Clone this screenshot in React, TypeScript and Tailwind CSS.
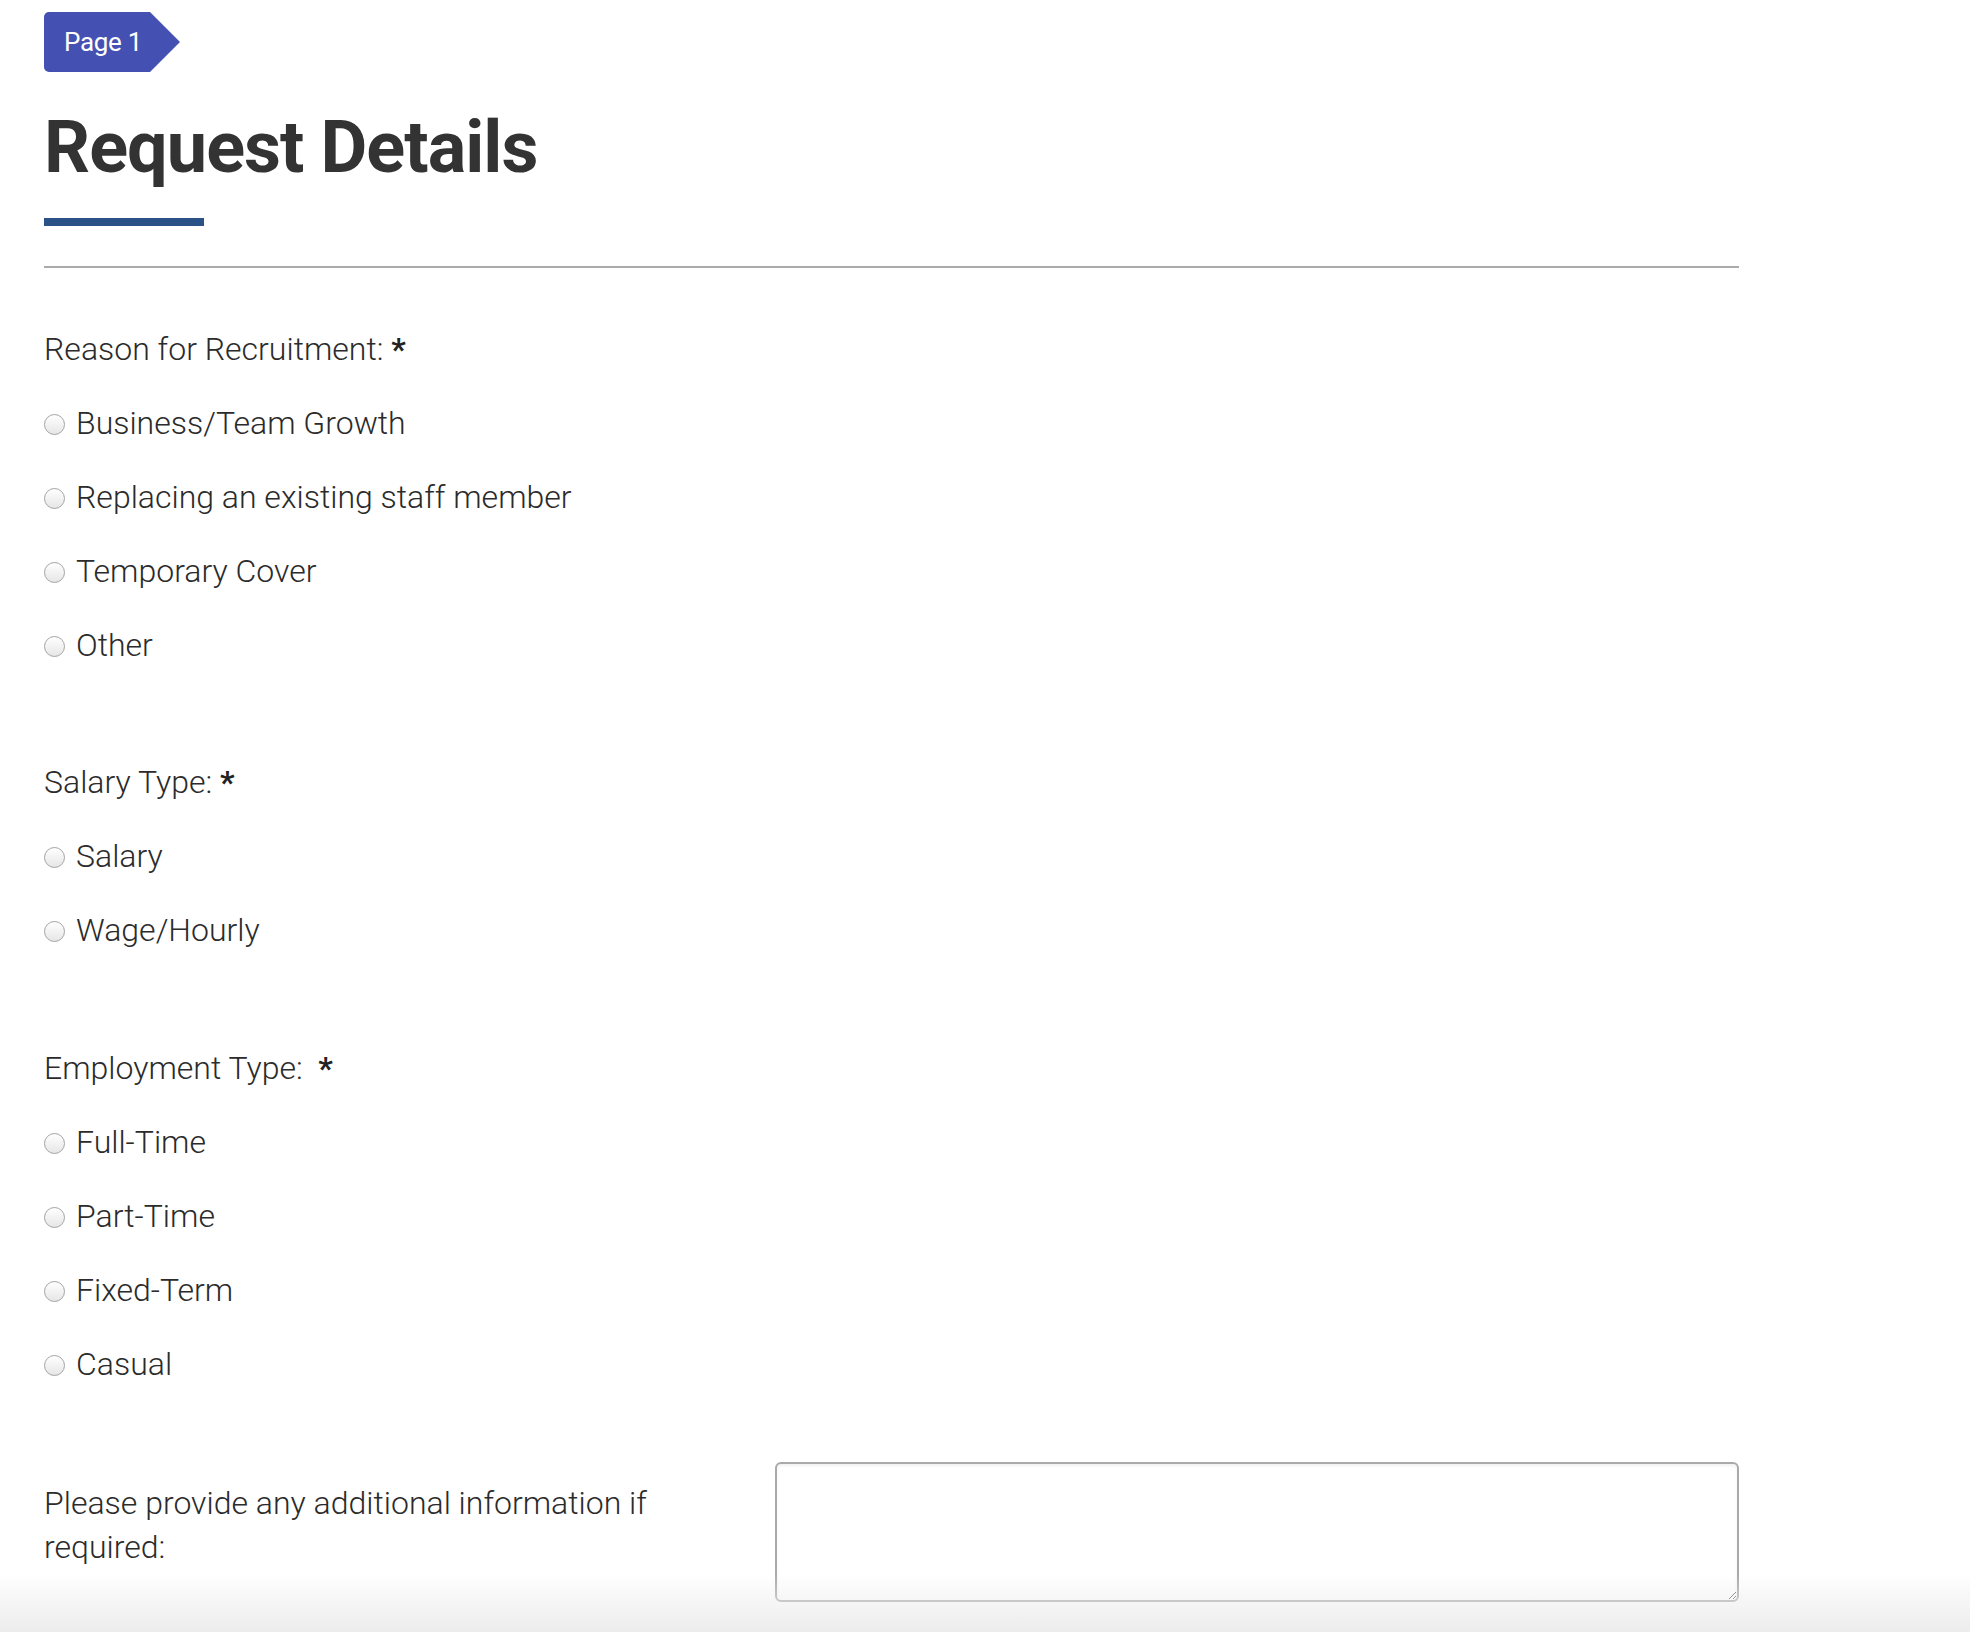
import { useState } from "react";

interface Group {
    name: string;
    label: string;
    options: string[];
    wideGap?: boolean;
}

const groups: Group[] = [
    {
        name: "reason",
        label: "Reason for Recruitment:",
        options: ["Business/Team Growth", "Replacing an existing staff member", "Temporary Cover", "Other"],
    },
    {
        name: "salary",
        label: "Salary Type:",
        options: ["Salary", "Wage/Hourly"],
    },
    {
        name: "employment",
        label: "Employment Type:",
        options: ["Full-Time", "Part-Time", "Fixed-Term", "Casual"],
        wideGap: true,
    },
];

function RadioRow({ name, label, checked, onChange }: { name: string; label: string; checked: boolean; onChange: () => void }) {
    return (
        <label className="flex h-[74px] items-start cursor-pointer">
            <input
                type="radio"
                name={name}
                checked={checked}
                onChange={onChange}
                className="appearance-none mt-[28px] w-[21px] h-[21px] shrink-0 rounded-full border border-[#a3a3a3] bg-linear-to-b from-white to-[#e6e6e6] checked:border-[#4451b2] checked:bg-[#4451b2]"
            />
            <span className="ml-[11px] leading-[74px]">{label}</span>
        </label>
    );
}

export default function App() {
    const [values, setValues] = useState<Record<string, string>>({});
    const [info, setInfo] = useState("");

    return (
        <div className="min-h-screen bg-white text-[#2b2b2b] font-['Roboto','Liberation_Sans',sans-serif]">
            <div className="pl-[44px] pt-[12px] w-[1739px]">
                {/* Page badge */}
                <div className="w-[136px] h-[60px] rounded-l-[5px] bg-[#4451b2] text-white text-[26px] leading-[60px] pl-[20px] tracking-[-0.3px] [clip-path:polygon(0_0,106px_0,136px_50%,106px_100%,0_100%)]">
                    Page 1
                </div>

                <h1 className="mt-[40px] text-[72px] leading-[72px] font-bold tracking-[-0.95px] text-[#333]">Request Details</h1>
                <div className="mt-[34px] w-[160px] h-[8px] bg-[#2a5287]" />
                <div className="mt-[40px] h-[2px] bg-[#aaaaaa]" />

                <div className="mt-[44px] text-[32px] font-light">
                    {groups.map((group, gi) => (
                        <div key={group.name} className={gi === 0 ? "" : gi === 1 ? "mt-[63px]" : "mt-[64px]"}>
                            <div className="h-[74px] leading-[74px]">
                                {group.label}
                                {group.wideGap ? "\u00a0\u00a0" : " "}
                                <span className="font-bold text-[#222]">*</span>
                            </div>
                            {group.options.map((opt) => (
                                <RadioRow
                                    key={opt}
                                    name={group.name}
                                    label={opt}
                                    checked={values[group.name] === opt}
                                    onChange={() => setValues({ ...values, [group.name]: opt })}
                                />
                            ))}
                        </div>
                    ))}

                    <div className="mt-[61px] flex items-start">
                        <p className="w-[690px] shrink-0 mt-[19px] leading-[44px] pr-[20px]">Please provide any additional information if required:</p>
                        <textarea
                            value={info}
                            onChange={(e) => setInfo(e.target.value)}
                            className="ml-[41px] flex-1 h-[140px] rounded-[6px] border-2 border-[#aaaaaa] bg-white shadow-[inset_0_2px_3px_rgba(0,0,0,0.06)] outline-none px-3 py-2 text-[28px]"
                        />
                    </div>
                </div>
            </div>

            {/* bottom fade */}
            <div className="fixed left-0 right-0 bottom-0 h-[58px] pointer-events-none bg-linear-to-b from-white/0 to-[#ececec]" />
        </div>
    );
}
